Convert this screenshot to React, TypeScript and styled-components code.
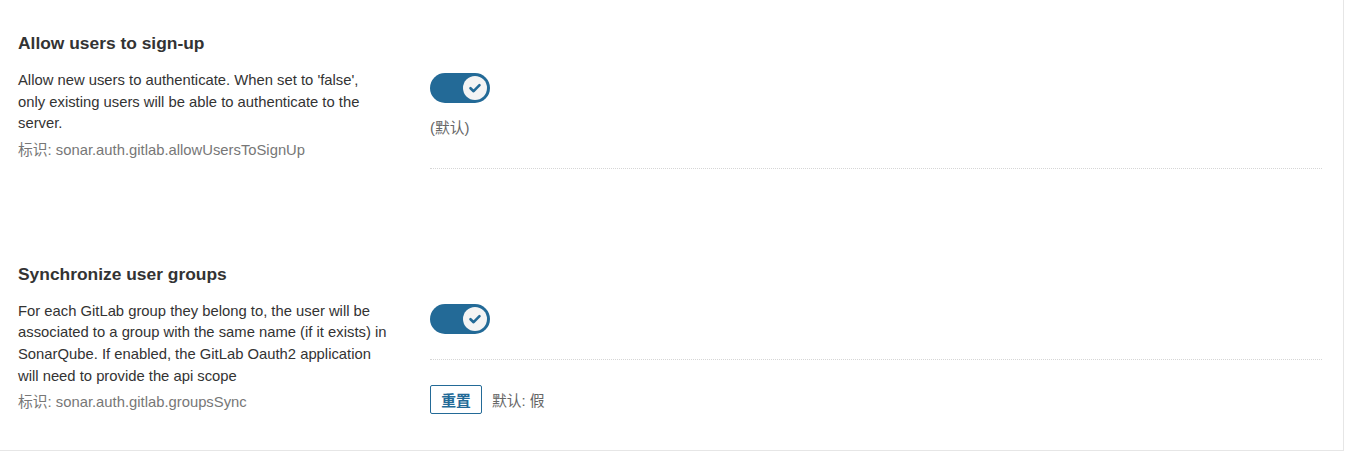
import React from "react";
import styled, { createGlobalStyle } from "styled-components";

const GlobalStyle = createGlobalStyle`
  html, body { margin: 0; padding: 0; background: #fff; }
  body {
    font-family: "Liberation Sans", Arial, "Noto Sans CJK SC", sans-serif;
    color: #333;
  }
`;

const Panel = styled.div`
  width: 1343px;
  height: 450px;
  background: #fff;
  border-right: 1px solid #e6e6e6;
  border-bottom: 1px solid #e6e6e6;
  display: flex;
  flex-direction: column;
`;

const Definition = styled.div<{ $top: number }>`
  display: flex;
  padding-top: ${(p) => p.$top}px;
`;

const Description = styled.div`
  width: 382px;
  margin-left: 18px;
  flex-shrink: 0;
`;

const Title = styled.h3`
  margin: 0 0 16px;
  font-size: 17.4px;
  font-weight: bold;
  line-height: 22px;
  color: #333;
`;

const Text = styled.div`
  font-size: 14.8px;
  line-height: 21.7px;
  color: #333;
  white-space: nowrap;
`;

const Key = styled.div`
  margin-top: 5px;
  font-size: 14.8px;
  line-height: 21.6px;
  color: #777;
`;

const ValueColumn = styled.div`
  margin-left: 30px;
  margin-right: 21px;
  flex: 1;
  padding-top: 41px;
`;

const Toggle = styled.button`
  position: relative;
  width: 60px;
  height: 30px;
  padding: 0;
  border: none;
  border-radius: 15px;
  background: #236a97;
  cursor: pointer;
  display: block;
`;

const Knob = styled.span`
  position: absolute;
  top: 3px;
  right: 3px;
  width: 24px;
  height: 24px;
  border-radius: 50%;
  background: #f4f4f4;
  display: flex;
  align-items: center;
  justify-content: center;
`;

const Note = styled.div<{ $mt: number }>`
  margin-top: ${(p) => p.$mt}px;
  font-size: 14.8px;
  line-height: 21.6px;
  color: #666;
`;

const Divider = styled.div<{ $mt: number }>`
  margin-top: ${(p) => p.$mt}px;
  border-top: 1px dotted #d6d6d6;
`;

const ResetRow = styled.div`
  display: flex;
  align-items: center;
  gap: 10px;
  margin-top: 25px;
`;

const ResetButton = styled.button`
  height: 29px;
  width: 52px;
  padding: 0;
  border: 1px solid #236a97;
  border-radius: 2px;
  background: #fff;
  color: #236a97;
  font-family: "Liberation Sans", Arial, "Noto Sans CJK SC", sans-serif;
  font-size: 14.8px;
  font-weight: bold;
  cursor: pointer;
`;

const DefaultText = styled.span`
  font-size: 14.8px;
  color: #666;
`;

const Check = () => (
  <svg width="14" height="14" viewBox="0 0 14 14">
    <path
      d="M2.5 7.2 L5.6 10.2 L11.5 4.2"
      fill="none"
      stroke="#236a97"
      strokeWidth="2.6"
      strokeLinecap="round"
      strokeLinejoin="round"
    />
  </svg>
);

const Switch = () => (
  <Toggle aria-checked="true" role="switch">
    <Knob>
      <Check />
    </Knob>
  </Toggle>
);

export default function App() {
  return (
    <>
      <GlobalStyle />
      <Panel>
        <Definition $top={32}>
          <Description>
            <Title>Allow users to sign-up</Title>
            <Text>
              Allow new users to authenticate. When set to 'false',
              <br />
              only existing users will be able to authenticate to the
              <br />
              server.
            </Text>
            <Key>标识: sonar.auth.gitlab.allowUsersToSignUp</Key>
          </Description>
          <ValueColumn>
            <Switch />
            <Note $mt={15}>(默认)</Note>
            <Divider $mt={28} />
          </ValueColumn>
        </Definition>
        <Definition $top={94}>
          <Description>
            <Title>Synchronize user groups</Title>
            <Text>
              For each GitLab group they belong to, the user will be
              <br />
              associated to a group with the same name (if it exists) in
              <br />
              SonarQube. If enabled, the GitLab Oauth2 application
              <br />
              will need to provide the api scope
            </Text>
            <Key>标识: sonar.auth.gitlab.groupsSync</Key>
          </Description>
          <ValueColumn>
            <Switch />
            <Divider $mt={25} />
            <ResetRow>
              <ResetButton>重置</ResetButton>
              <DefaultText>默认: 假</DefaultText>
            </ResetRow>
          </ValueColumn>
        </Definition>
      </Panel>
    </>
  );
}
